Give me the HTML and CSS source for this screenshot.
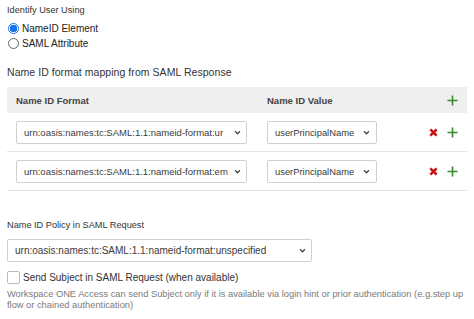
FILE: index.html
```html
<!DOCTYPE html>
<html>
<head>
<meta charset="utf-8">
<link rel="stylesheet" href="styles.css">
</head>
<body>
<div class="page">
  <div class="label">Identify User Using</div>
  <div class="radios">
    <label class="radio"><span class="rb rb-on"></span>NameID Element</label>
    <label class="radio"><span class="rb"></span>SAML Attribute</label>
  </div>
  <div class="label label-map">Name ID format mapping from SAML Response</div>
  <div class="table">
    <div class="row head">
      <div class="th">Name ID Format</div>
      <div class="th">Name ID Value</div>
      <div class="actions">
        <svg class="plus" viewBox="0 0 12 12"><path d="M6 0.5V11.5M0.5 6H11.5"/></svg>
      </div>
    </div>
    <div class="row body">
      <div class="select wide"><span class="val">urn:oasis:names:tc:SAML:1.1:nameid-format:ur</span><svg class="chev" viewBox="0 0 8 6"><path d="M1 1.5L4 4.5L7 1.5"/></svg></div>
      <div class="select short"><span class="val">userPrincipalName</span><svg class="chev" viewBox="0 0 8 6"><path d="M1 1.5L4 4.5L7 1.5"/></svg></div>
      <div class="actions">
        <svg class="del" viewBox="0 0 10 10"><path d="M1.5 1.5L8.5 8.5M8.5 1.5L1.5 8.5"/></svg>
        <svg class="plus" viewBox="0 0 12 12"><path d="M6 0.5V11.5M0.5 6H11.5"/></svg>
      </div>
    </div>
    <div class="row body">
      <div class="select wide"><span class="val">urn:oasis:names:tc:SAML:1.1:nameid-format:em</span><svg class="chev" viewBox="0 0 8 6"><path d="M1 1.5L4 4.5L7 1.5"/></svg></div>
      <div class="select short"><span class="val">userPrincipalName</span><svg class="chev" viewBox="0 0 8 6"><path d="M1 1.5L4 4.5L7 1.5"/></svg></div>
      <div class="actions">
        <svg class="del" viewBox="0 0 10 10"><path d="M1.5 1.5L8.5 8.5M8.5 1.5L1.5 8.5"/></svg>
        <svg class="plus" viewBox="0 0 12 12"><path d="M6 0.5V11.5M0.5 6H11.5"/></svg>
      </div>
    </div>
  </div>
  <div class="label label-policy">Name ID Policy in SAML Request</div>
  <div class="select policy"><span class="val">urn:oasis:names:tc:SAML:1.1:nameid-format:unspecified</span><svg class="chev" viewBox="0 0 8 6"><path d="M1 1.5L4 4.5L7 1.5"/></svg></div>
  <label class="check"><span class="cb"></span>Send Subject in SAML Request (when available)</label>
  <div class="help">Workspace ONE Access can send Subject only if it is available via login hint or prior authentication (e.g.step up flow or chained authentication)</div>
</div>
</body>
</html>
```

FILE: styles.css
```css
html, body {
  margin: 0;
  padding: 0;
  background: #fff;
}
.page {
  padding: 5px 7px 0 7px;
  font-family: "Liberation Sans", Arial, sans-serif;
  font-size: 9.2px;
  color: #333;
}
.label {
  line-height: 11px;
}
.radios {
  display: flex;
  flex-direction: column;
  gap: 4px;
  margin-top: 7px;
}
.radio {
  display: flex;
  align-items: center;
  gap: 3px;
  font-size: 10px;
  line-height: 11px;
  color: #222;
}
.rb {
  width: 9px;
  height: 9px;
  border: 1px solid #666;
  border-radius: 50%;
  box-sizing: content-box;
  margin-left: 1px;
}
.rb-on {
  border-color: #1a73e8;
  background: radial-gradient(circle, #1a73e8 0 3.5px, #fff 4px);
}
.label-map {
  margin-top: 18px;
  font-size: 10.5px;
  letter-spacing: 0.05px;
}
.table {
  margin-top: 9px;
}
.row {
  display: grid;
  grid-template-columns: 231px 110px 1fr;
  column-gap: 20px;
  align-items: center;
  padding: 0 9px;
}
.head {
  height: 26px;
  background: #efefef;
  font-weight: bold;
  color: #444;
}
.body {
  padding-top: 8px;
  padding-bottom: 7px;
  border-bottom: 1px solid #e4e4e4;
}
.th {
  font-size: 9.5px;
}
.actions {
  display: flex;
  justify-content: flex-end;
  align-items: center;
  gap: 9px;
}
.plus {
  width: 11px;
  height: 11px;
  fill: none;
  stroke: #3c8a2e;
  stroke-width: 1.8;
}
.del {
  width: 9px;
  height: 9px;
  fill: none;
  stroke: #cc1111;
  stroke-width: 2.8;
}
.select {
  display: flex;
  align-items: center;
  justify-content: space-between;
  height: 23px;
  box-sizing: border-box;
  border: 1px solid #d0d0d0;
  border-radius: 2px;
  background: #fff;
  padding: 0 5px 0 7px;
  color: #3a3a3a;
  font-size: 9.5px;
  overflow: hidden;
  white-space: nowrap;
}
.select.short {
  font-size: 9.4px;
  padding-right: 6px;
}
.select .val {
  overflow: hidden;
}
.chev {
  flex: none;
  width: 7px;
  height: 5px;
  fill: none;
  stroke: #444;
  stroke-width: 1.5;
  margin-left: 4px;
}
.label-policy {
  margin-top: 29px;
}
.policy {
  width: 305px;
  margin-top: 8px;
  font-size: 10px;
}
.check {
  display: flex;
  align-items: center;
  gap: 3px;
  margin-top: 9px;
  color: #333;
  font-size: 10px;
}
.cb {
  width: 13px;
  height: 13px;
  box-sizing: border-box;
  border: 1px solid #bbb;
  border-radius: 2px;
  background: #fff;
}
.help {
  margin-top: 5px;
  color: #7a7a7a;
  font-size: 9.3px;
  line-height: 11px;
}
```
